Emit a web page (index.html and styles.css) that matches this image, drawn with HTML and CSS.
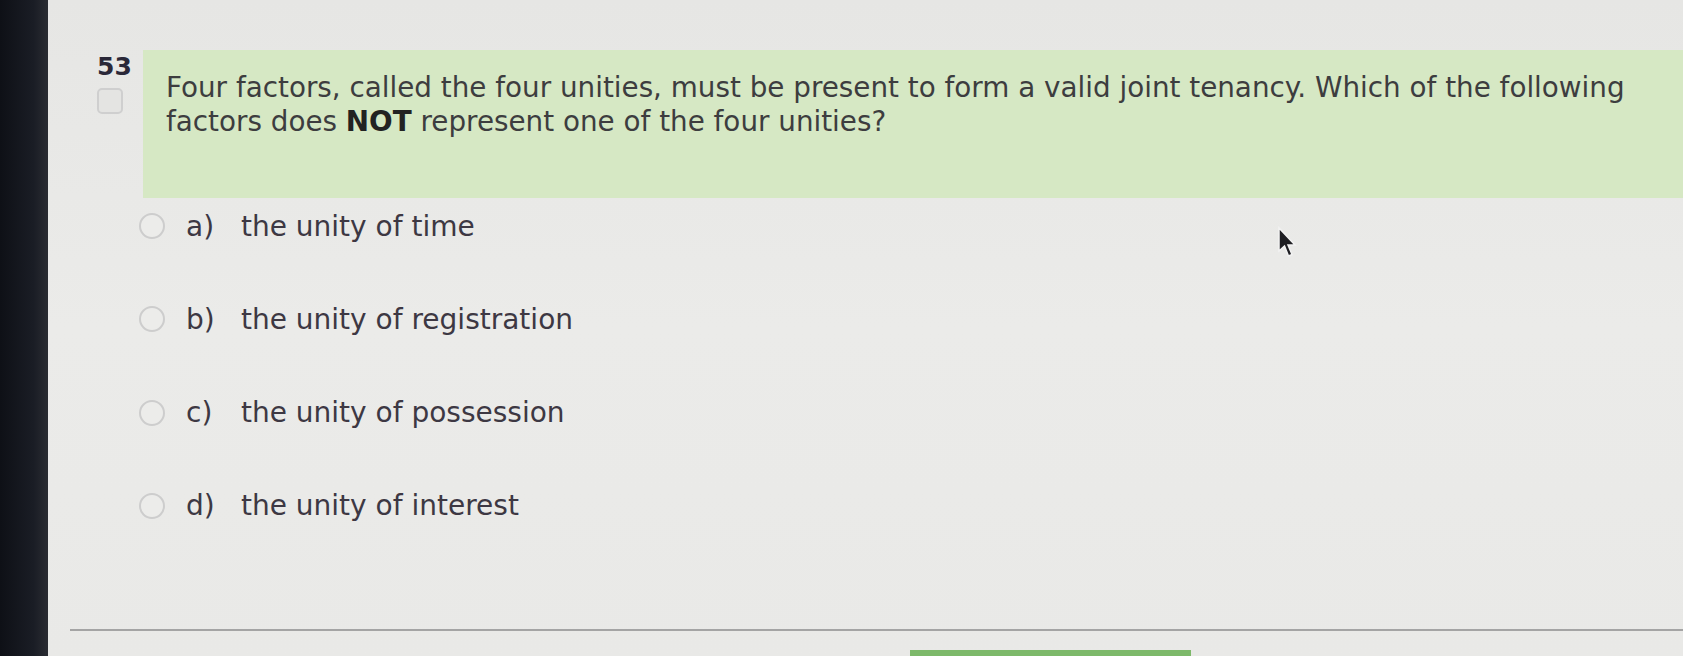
FILE: index.html
```html
<!DOCTYPE html>
<html>
<head>
<meta charset="utf-8">
<link rel="stylesheet" href="styles.css">
</head>
<body>
<div class="screen">
  <div class="bezel"></div>
  <div class="page">
    <div class="question">
      <div class="qside">
        <div class="qnum">53</div>
        <div class="flag"></div>
      </div>
      <div class="qtext">
        <span class="qline">Four factors, called the four unities, must be present to form a valid joint tenancy. Which of the following</span>
        <span class="qline"><span>factors does </span><b>NOT</b><span> represent one of the four unities?</span></span>
      </div>
    </div>
    <div class="answers">
      <div class="opt"><span class="radio"></span><span class="letter">a)</span><span class="atext">the unity of time</span></div>
      <div class="opt"><span class="radio"></span><span class="letter">b)</span><span class="atext">the unity of registration</span></div>
      <div class="opt"><span class="radio"></span><span class="letter">c)</span><span class="atext">the unity of possession</span></div>
      <div class="opt"><span class="radio"></span><span class="letter">d)</span><span class="atext">the unity of interest</span></div>
    </div>
    <div class="divider"></div>
    <div class="footer"><div class="btn"></div></div>
    <svg class="cursor" width="22" height="34" viewBox="0 0 22 34"><path d="M2 2 L2 25 L7.5 20 L11.5 30 L15 28.5 L11 19 L18 19 Z" fill="#1e1e22" stroke="#f2f2f2" stroke-width="1.5"/></svg>
  </div>
</div>
</body>
</html>
```
FILE: styles.css
```css
html, body {
  margin: 0;
  padding: 0;
  height: 100%;
  overflow: hidden;
}
body {
  font-family: "DejaVu Sans", Verdana, sans-serif;
  color: #3c3b40;
  background: #e8e8e6;
}
.screen {
  display: flex;
  height: 656px;
}
.bezel {
  width: 48px;
  flex: none;
  background: linear-gradient(90deg, #0e1016 0%, #1a1d25 70%, #2a2c32 100%);
}
.page {
  flex: 1;
  position: relative;
  background: linear-gradient(180deg, #e6e6e4 0%, #ebebe9 50%, #e9e9e7 100%);
  padding-top: 50px;
}
.question {
  display: flex;
}
.qside {
  width: 95px;
  flex: none;
  padding-left: 49px;
  box-sizing: border-box;
  padding-top: 3.5px;
}
.qnum {
  font-weight: bold;
  font-size: 25px;
  line-height: 26px;
  color: #2a2838;
}
.flag {
  width: 22px;
  height: 22px;
  margin-top: 8.5px;
  border: 2px solid #cfcfcf;
  border-radius: 5px;
  background: #e4e4e2;
}
.qtext {
  flex: 1;
  background: #d6e8c4;
  height: 148px;
  box-sizing: border-box;
  padding: 21px 20px 0 23px;
  font-size: 27.8px;
  line-height: 34px;
  color: #3d3d3f;
}
.qline {
  display: block;
  white-space: nowrap;
}
.qtext b {
  color: #222;
}
.answers {
  padding-top: 6px;
  padding-left: 91px;
}
.opt {
  display: flex;
  align-items: center;
  height: 44px;
  margin-bottom: 49.3px;
  font-size: 28px;
  color: #3d3843;
}
.radio {
  width: 22px;
  height: 22px;
  border: 2px solid #cdcdcd;
  border-radius: 50%;
  background: #ececea;
  flex: none;
}
.letter {
  margin-left: 21px;
  width: 55px;
}
.divider {
  position: absolute;
  left: 22px;
  right: 0;
  top: 629px;
  height: 2px;
  background: #a4a4a4;
}
.footer {
  position: absolute;
  left: 862px;
  top: 650px;
}
.btn {
  width: 281px;
  height: 12px;
  background: #7db96a;
}
.cursor {
  position: absolute;
  left: 1229px;
  top: 226px;
}
```
